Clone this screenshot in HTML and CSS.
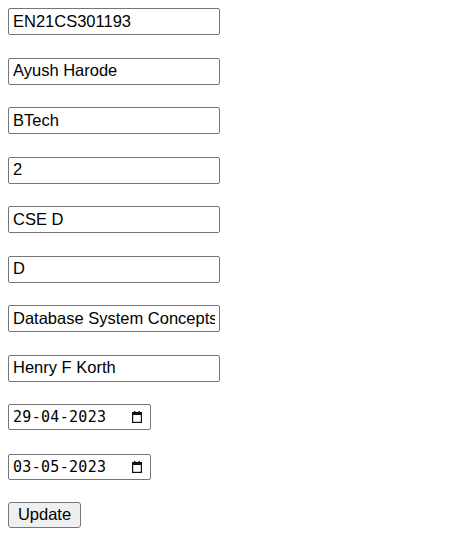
FILE: index.html
```html
<!DOCTYPE html>
<html>
<head>
<meta charset="utf-8">
<link rel="stylesheet" href="styles.css">
</head>
<body>
<form class="form">
  <input class="field" type="text" value="EN21CS301193">
  <input class="field" type="text" value="Ayush Harode">
  <input class="field" type="text" value="BTech">
  <input class="field" type="text" value="2">
  <input class="field" type="text" value="CSE D">
  <input class="field" type="text" value="D">
  <input class="field" type="text" value="Database System Concepts">
  <input class="field" type="text" value="Henry F Korth">
  <div class="date d1">
    <span class="date-text">29-04-2023</span>
    <svg class="cal" width="10" height="12" viewBox="0 0 10 12"><rect x="2" y="0" width="1.4" height="2.5" fill="#111"/><rect x="6.6" y="0" width="1.4" height="2.5" fill="#111"/><rect x="0.6" y="1.6" width="8.8" height="9.8" fill="none" stroke="#111" stroke-width="1.2"/><rect x="0.6" y="1.6" width="8.8" height="2.4" fill="#111"/></svg>
  </div>
  <div class="date d2">
    <span class="date-text">03-05-2023</span>
    <svg class="cal" width="10" height="12" viewBox="0 0 10 12"><rect x="2" y="0" width="1.4" height="2.5" fill="#111"/><rect x="6.6" y="0" width="1.4" height="2.5" fill="#111"/><rect x="0.6" y="1.6" width="8.8" height="9.8" fill="none" stroke="#111" stroke-width="1.2"/><rect x="0.6" y="1.6" width="8.8" height="2.4" fill="#111"/></svg>
  </div>
  <button class="btn" type="button">Update</button>
</form>
</body>
</html>
```
FILE: styles.css
```css
html, body {
  margin: 0;
  padding: 0;
  background: #fff;
}
body {
  padding: 8px;
}
.form {
  display: flex;
  flex-direction: column;
  align-items: flex-start;
}
.field {
  box-sizing: border-box;
  width: 212px;
  height: 27px;
  margin: 0 0 22.5px 0;
  padding: 0 4px 1px 4px;
  border: 1px solid #767676;
  border-radius: 2px;
  font-family: "Liberation Sans", Arial, sans-serif;
  font-size: 16.5px;
  color: #000;
  background: #fff;
  outline: none;
}
.date {
  box-sizing: border-box;
  width: 143px;
  height: 26px;
  border: 1px solid #767676;
  border-radius: 2px;
  display: flex;
  align-items: center;
  justify-content: space-between;
  padding: 0 8px 0 4px;
  font-family: "DejaVu Sans Mono", "Liberation Mono", monospace;
  font-size: 15px;
  color: #000;
}
.d1 {
  margin-top: -0.5px;
  margin-bottom: 24px;
}
.d2 {
  margin-bottom: 22.5px;
}
.date-text {
  letter-spacing: 0.3px;
}
.cal {
  display: block;
}
.btn {
  box-sizing: border-box;
  width: 73px;
  height: 26px;
  padding: 0 0 1px 0;
  border: 1px solid #767676;
  border-radius: 3px;
  background: #efefef;
  font-family: "Liberation Sans", Arial, sans-serif;
  font-size: 16.5px;
  color: #000;
}
```
